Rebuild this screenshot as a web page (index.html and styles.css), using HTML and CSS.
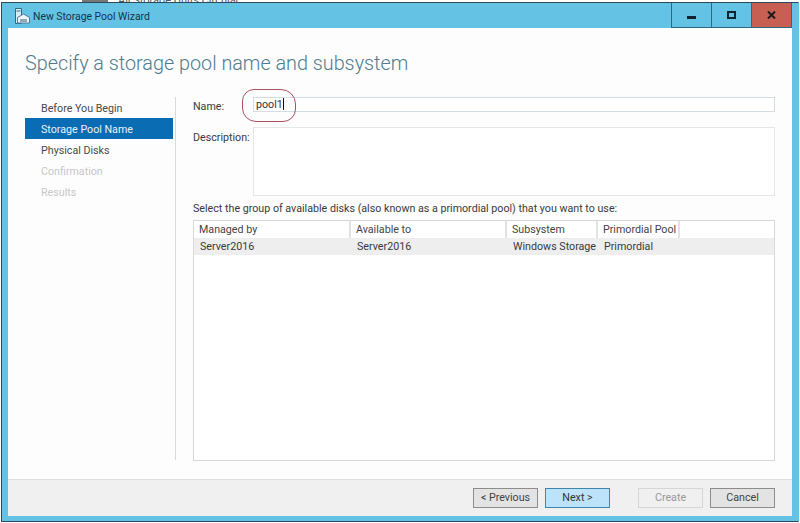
FILE: index.html
```html
<!DOCTYPE html>
<html lang="en">
<head>
<meta charset="utf-8">
<title>New Storage Pool Wizard</title>
<link rel="stylesheet" href="styles.css">
</head>
<body>
<div class="behind"><span class="behind-icon"></span><span class="behind-text">All Storage Units Circular</span></div>
<div class="window">
  <div class="titlebar">
    <svg class="app-icon" width="15" height="16" viewBox="0 0 15 16"><path d="M.5.5h6v15h-6z" fill="#d6ecf6" stroke="#2f6a8c"/><path d="M1.500 3h4" stroke="#2f6a8c"/><path d="M2.500 15V9.500L8.500 6l6 3.500V15z" fill="#eef4f7" stroke="#4a7d9a"/><path d="M5 11h7v3H5z" fill="#8fa9b8"/></svg>
    <span class="title">New Storage Pool Wizard</span>
    <div class="controls">
      <div class="ctl"><span class="min"></span></div>
      <div class="ctl"><span class="max"></span></div>
      <div class="ctl close"><svg width="9" height="8" viewBox="0 0 9 8"><path d="M1 .5 8 7.500M8 .5 1 7.500" stroke="#1a1a1a" stroke-width="2"/></svg></div>
    </div>
  </div>
  <div class="client">
    <h1>Specify a storage pool name and subsystem</h1>
    <div class="body">
      <nav class="nav">
        <div class="step">Before You Begin</div>
        <div class="step active">Storage Pool Name</div>
        <div class="step">Physical Disks</div>
        <div class="step off">Confirmation</div>
        <div class="step off">Results</div>
      </nav>
      <main class="content">
        <div class="row name-row">
          <label class="lbl">Name:</label>
          <div class="input name-input">pool1<span class="caret"></span></div>
          <span class="circle"></span>
        </div>
        <div class="row desc-row">
          <label class="lbl">Description:</label>
          <div class="input desc"></div>
        </div>
        <p class="hint">Select the group of available disks (also known as a primordial pool) that you want to use:</p>
        <div class="table">
          <div class="thead">
            <div class="c c1">Managed by</div>
            <div class="c c2">Available to</div>
            <div class="c c3">Subsystem</div>
            <div class="c c4">Primordial Pool</div>
          </div>
          <div class="tr">
            <div class="c c1">Server2016</div>
            <div class="c c2">Server2016</div>
            <div class="c c3">Windows Storage</div>
            <div class="c c4">Primordial</div>
          </div>
        </div>
      </main>
    </div>
    <footer class="footer">
      <button class="btn">&lt; Previous</button>
      <button class="btn next">Next &gt;</button>
      <button class="btn create">Create</button>
      <button class="btn">Cancel</button>
    </footer>
  </div>
</div>
</body>
</html>
```
FILE: styles.css
```css
* { box-sizing: border-box; }
html, body { margin: 0; height: 523px; overflow: hidden; }
body { background: #fff; font-family: Roboto, "Liberation Sans", sans-serif; font-size: 10.700px; color: #333; position: relative; padding: 2px 1px 1px 1px; }
.behind { position: absolute; left: 82px; top: -3px; display: flex; gap: 10px; color: #555; font-size: 11px; line-height: 8px; }
.behind-icon { width: 26px; height: 5px; background: #777; }
.behind-text { height: 5px; overflow: hidden; }
.window { position: relative; height: 520px; background: #64c3e5; border: 1px solid #2b4a5c; border-right-color: #64c3e5; padding: 0 6px 5px 6px; display: flex; flex-direction: column; }
.titlebar { height: 25px; flex: none; display: flex; align-items: center; padding-left: 7px; }
.app-icon { margin-right: 3px; }
.title { font-size: 10.400px; color: #16324a; margin-top: 1px; }
.controls { margin-left: auto; height: 25px; display: flex; border-left: 1px solid #2f6680; border-bottom: 1px solid #2f6680; }
.ctl { width: 40px; display: flex; align-items: center; justify-content: center; border-right: 1px solid #2f6680; }
.close { background: #c75f52; }
.min { width: 9px; height: 3px; background: #10222e; margin-top: 5px; }
.max { width: 9px; height: 8px; border: 2px solid #10222e; }
.client { flex: 1; min-height: 0; background: #fdfdfd; display: flex; flex-direction: column; }
h1 { margin: 0; padding: 22px 0 0 17px; height: 74px; font-weight: 300; font-size: 19.800px; line-height: 27px; color: #4f7c8c; }
.body { flex: 1; min-height: 0; display: flex; padding-left: 17px; }
.nav { width: 151px; flex: none; height: 363px; margin-top: -5px; border-right: 1px solid #d9d9d9; padding-right: 2px; }
.step { height: 21px; line-height: 23px; padding-left: 16px; color: #4a4a4a; }
.step.active { background: #0a6cb3; color: #e8f3fa; }
.step.off { color: #c8c8c8; }
.content { flex: 1; min-width: 0; padding: 0 17px 0 17px; display: flex; flex-direction: column; }
.row { display: flex; position: relative; }
.lbl { width: 60px; flex: none; color: #3a3a3a; }
.name-row { height: 30px; margin-top: -5px; }
.name-row .lbl { line-height: 16px; padding-top: 2px; }
.input { flex: 1; border: 1px solid #d3dde3; background: #fff; }
.name-input { height: 15px; line-height: 14px; padding-left: 2px; color: #333; flex: 1; }
.caret { display: inline-block; width: 1px; height: 12px; background: #111; vertical-align: -2px; }
.circle { position: absolute; left: 49px; top: -8px; width: 54px; height: 33px; border: 1px solid #a8505f; border-radius: 12px 15px 13px 14px; }
.desc-row { height: 69px; flex: none; }
.desc-row .lbl { padding-top: 4px; line-height: 14px; }
.desc { border-color: #e6e6e6; }
.hint { margin: 5px 0 0; height: 19px; line-height: 15px; color: #3a3a3a; }
.table { height: 241px; flex: none; border: 1px solid #d8d8d8; background: #fff; }
.thead, .tr { display: flex; }
.thead { height: 17px; }
.thead .c { border-right: 2px solid #e3e3e3; line-height: 17px; padding-left: 5px; color: #444; white-space: nowrap; }
.tr { height: 17px; background: #eeeeee; line-height: 17px; }
.tr .c { padding-left: 6px; color: #3a3a3a; white-space: nowrap; }
.c1 { width: 157px; }
.c2 { width: 156px; }
.c3 { width: 91px; }
.c4 { width: 82px; }
.footer { height: 37px; flex: none; background: #f0f0f0; border-top: 1px solid #dedede; display: flex; padding: 8px 17px 0 0; justify-content: flex-end; gap: 7px; }
.btn { width: 65px; height: 20px; padding: 0 0 1px; font: inherit; color: #444; background: #e3e3e3; border: 1px solid #8c8c8c; }
.next { background: #bde3fb; border-color: #3f86ad; color: #333; margin-right: 21px; }
.create { background: #f0f0f0; border-color: #d6d6d6; color: #999; }
```
